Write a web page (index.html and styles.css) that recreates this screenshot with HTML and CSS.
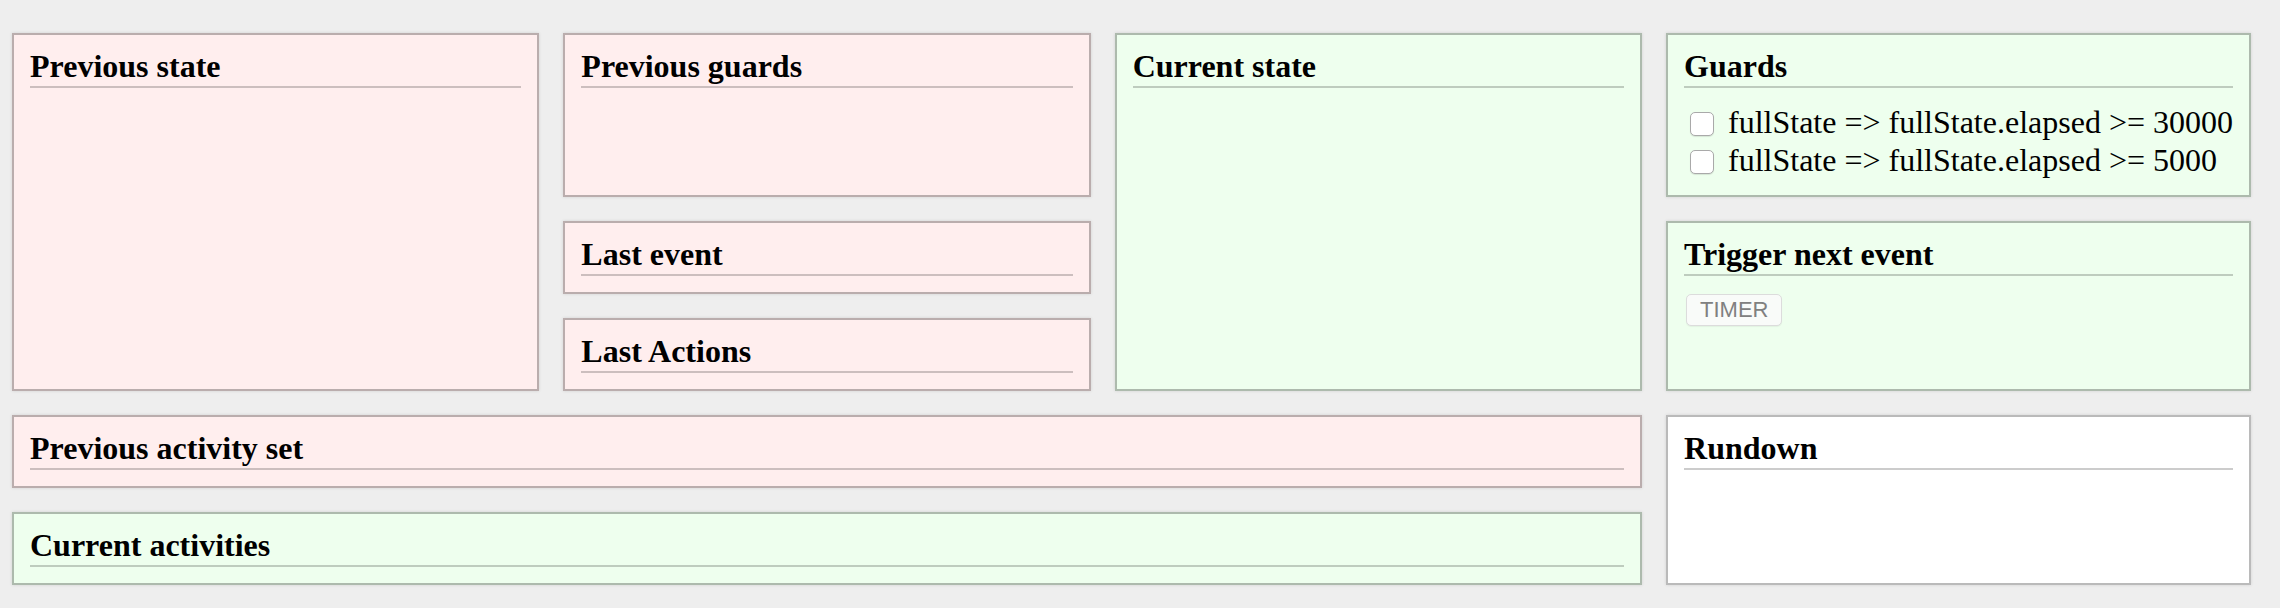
FILE: index.html
```html
<!DOCTYPE html>
<html>
<head>
<meta charset="utf-8">
<title>State inspector</title>
<link rel="stylesheet" href="styles.css">
</head>
<body>
<div class="board">
  <section class="panel prev prev-state">
    <h2 class="panel-title">Previous state</h2>
  </section>
  <section class="panel prev prev-guards">
    <h2 class="panel-title">Previous guards</h2>
  </section>
  <section class="panel current cur-state">
    <h2 class="panel-title">Current state</h2>
  </section>
  <section class="panel current guards">
    <h2 class="panel-title">Guards</h2>
    <ul class="guard-list">
      <li class="guard"><input type="checkbox" class="guard-check"><span>fullState =&gt; fullState.elapsed &gt;= 30000</span></li>
      <li class="guard"><input type="checkbox" class="guard-check"><span>fullState =&gt; fullState.elapsed &gt;= 5000</span></li>
    </ul>
  </section>
  <section class="panel prev last-event">
    <h2 class="panel-title">Last event</h2>
  </section>
  <section class="panel current trigger">
    <h2 class="panel-title">Trigger next event</h2>
    <button class="event-btn" type="button">TIMER</button>
  </section>
  <section class="panel prev last-actions">
    <h2 class="panel-title">Last Actions</h2>
  </section>
  <section class="panel prev prev-activities">
    <h2 class="panel-title">Previous activity set</h2>
  </section>
  <section class="panel neutral rundown">
    <h2 class="panel-title">Rundown</h2>
  </section>
  <section class="panel current cur-activities">
    <h2 class="panel-title">Current activities</h2>
  </section>
</div>
</body>
</html>
```

FILE: styles.css
```css
html, body {
  margin: 0;
  padding: 0;
  background: #eeeeee;
}

body {
  font-family: "Liberation Serif", "Times New Roman", serif;
  color: #000;
}

.board {
  display: grid;
  grid-template-columns: 1fr 1fr 1fr max-content;
  grid-template-rows: auto auto auto auto auto;
  column-gap: 24px;
  row-gap: 24px;
  padding: 33px 29px 25px 12px;
}

.panel {
  min-width: 0;
  border: 2px solid rgba(0, 0, 0, 0.27);
  padding: 13px 16px 16px;
  box-shadow: 0 0 3px rgba(0, 0, 0, 0.12);
}

.prev { background: #ffeeee; }
.current { background: #eeffee; }
.neutral { background: #ffffff; }

.panel-title {
  margin: 0;
  font-size: 32px;
  font-weight: bold;
  line-height: 36px;
  padding-bottom: 2px;
  border-bottom: 2px solid rgba(0, 0, 0, 0.2);
}

.prev-state { grid-column: 1; grid-row: 1 / 4; }
.prev-guards { grid-column: 2; grid-row: 1; }
.last-event { grid-column: 2; grid-row: 2; }
.last-actions { grid-column: 2; grid-row: 3; }
.cur-state { grid-column: 3; grid-row: 1 / 4; }
.guards { grid-column: 4; grid-row: 1; }
.trigger { grid-column: 4; grid-row: 2 / 4; }
.prev-activities { grid-column: 1 / 4; grid-row: 4; }
.cur-activities { grid-column: 1 / 4; grid-row: 5; }
.rundown { grid-column: 4; grid-row: 4 / 6; }

.guard-list {
  list-style: none;
  margin: 15px 0 0;
  padding: 0;
}

.guard {
  display: flex;
  align-items: center;
  height: 38px;
  font-size: 32px;
  white-space: nowrap;
}

.guard-check {
  appearance: none;
  -webkit-appearance: none;
  width: 24px;
  height: 24px;
  margin: 3px 14px 0 6px;
  background: #ffffff;
  border: 1px solid #a9a9a9;
  border-radius: 5px;
  box-shadow: 0 1px 1px rgba(0, 0, 0, 0.1);
  flex: none;
}

.event-btn {
  display: block;
  margin: 18px 0 0 2px;
  padding: 0 13px;
  height: 32px;
  font-family: "Liberation Sans", Arial, sans-serif;
  font-size: 22px;
  color: #808080;
  background: #f9fbf9;
  border: 1px solid #dcdcdc;
  border-radius: 5px;
  box-shadow: 0 1px 1px rgba(0, 0, 0, 0.05);
}
```
